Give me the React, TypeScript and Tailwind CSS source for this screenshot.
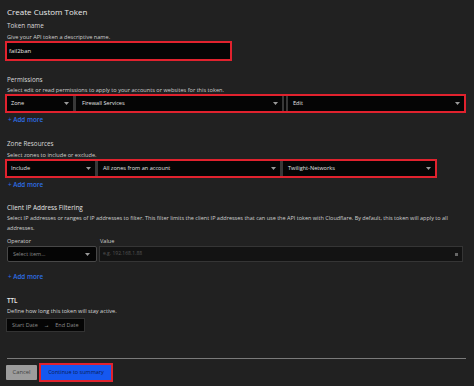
import React from "react";

const Caret = () => (
  <svg width="5" height="3" viewBox="0 0 5 3" className="shrink-0">
    <path d="M0 0 L5 0 L2.5 3 Z" fill="#9a9a9a" />
  </svg>
);

const Cell = ({ label, w, pl }: { label: string; w: string; pl: string }) => (
  <div className={`${w} h-full bg-[#050505] flex items-center justify-between ${pl} pr-[4px]`}>
    <span className="text-[5.6px] text-[#e4e4e4] whitespace-nowrap">{label}</span>
    <Caret />
  </div>
);

const AddMore = ({ mt }: { mt: string }) => (
  <div className={`${mt} h-[10px] leading-[10px] text-[6.3px] text-[#2e6fe6] font-semibold pl-[1px] whitespace-nowrap`}>
    <span className="font-normal">+</span> Add more
  </div>
);

export default function App() {
  return (
    <div
      className="w-[474px] h-[386px] bg-[#212121] text-[#dcdcdc] px-[7px] pt-[5px] overflow-hidden flex flex-col"
      style={{ fontFamily: '"Open Sans", "Noto Sans", sans-serif' }}
    >
      <div className="h-[14px] leading-[14px] text-[8px] text-[#ececec] whitespace-nowrap">Create Custom Token</div>
      <div className="mt-[2px] h-[10px] leading-[10px] text-[6.4px] text-[#d8d8d8] whitespace-nowrap">Token name</div>
      <div className="mt-[2px] h-[8px] leading-[8px] text-[5.6px] text-[#d0d0d0] whitespace-nowrap">Give your API token a descriptive name.</div>
      <div className="ml-[-2px] w-[227px] h-[20px] border-2 border-[#e1222e] bg-[#050505] flex items-center pl-[2px]">
        <span className="text-[5.9px] text-[#e8e8e8]">fail2ban</span>
      </div>

      <div className="mt-[14px] h-[10px] leading-[10px] text-[6.3px] text-[#d8d8d8] whitespace-nowrap">Permissions</div>
      <div className="mt-[1px] h-[8px] leading-[8px] text-[5.6px] text-[#d0d0d0] whitespace-nowrap">
        Select edit or read permissions to apply to your accounts or websites for this token.
      </div>
      <div className="ml-[-2px] w-[461px] h-[19px] border-2 border-[#e1222e] bg-[#383838] flex gap-[3px]">
        <Cell label="Zone" w="w-[66px]" pl="pl-[4px]" />
        <Cell label="Firewall Services" w="w-[206px]" pl="pl-[6px]" />
        <div className="w-[2px] h-full bg-[#050505] -mx-[1px]" />
        <Cell label="Edit" w="flex-1" pl="pl-[5px]" />
      </div>
      <AddMore mt="mt-[2px]" />

      <div className="mt-[14px] h-[10px] leading-[10px] text-[6.3px] text-[#d8d8d8] whitespace-nowrap">Zone Resources</div>
      <div className="mt-[2px] h-[8px] leading-[8px] text-[5.6px] text-[#d0d0d0] whitespace-nowrap">Select zones to include or exclude.</div>
      <div className="ml-[-2px] w-[432px] h-[19px] border-2 border-[#e1222e] bg-[#383838] flex gap-[3px]">
        <Cell label="Include" w="w-[88px]" pl="pl-[4px]" />
        <Cell label="All zones from an account" w="w-[182px]" pl="pl-[5px]" />
        <Cell label="Twilight-Networks" w="flex-1" pl="pl-[5px]" />
      </div>
      <AddMore mt="mt-[2px]" />

      <div className="mt-[13px] h-[10px] leading-[10px] text-[6.4px] text-[#e4e4e4] whitespace-nowrap">Client IP Address Filtering</div>
      <div className="leading-[10px] text-[5.5px] text-[#cfcfcf] w-[458px]">
        Select IP addresses or ranges of IP addresses to filter. This filter limits the client IP addresses that can use the API token with Cloudflare. By default, this token will apply to all addresses.
      </div>
      <div className="mt-[3px] flex h-[10px] leading-[10px] text-[5.6px] text-[#d0d0d0] whitespace-nowrap">
        <div className="w-[93px]">Operator</div>
        <div>Value</div>
      </div>
      <div className="flex h-[16px]">
        <div className="w-[90px] h-full bg-[#050505] border border-[#484848] rounded-[2px] flex items-center justify-between pl-[5px] pr-[6px]">
          <span className="text-[5.5px] text-[#8a8a8a] whitespace-nowrap">Select item...</span>
          <Caret />
        </div>
        <div className="ml-[2px] w-[364px] h-full bg-[#131313] border border-[#353535] flex items-center justify-between pl-[3px] pr-[4px]">
          <span className="text-[5px] text-[#555] whitespace-nowrap">e.g. 192.168.1.88</span>
          <span className="w-[3px] h-[3px] bg-[#666]" />
        </div>
      </div>
      <AddMore mt="mt-[10px]" />

      <div className="mt-[14px] h-[10px] leading-[10px] text-[6.3px] text-[#ececec] font-semibold whitespace-nowrap">TTL</div>
      <div className="mt-[1px] h-[9px] leading-[9px] text-[5.6px] text-[#d8d8d8] whitespace-nowrap">Define how long this token will stay active.</div>
      <div className="mt-[2px] ml-[-1px] w-[79px] h-[14px] bg-[#050505] border border-[#333] flex items-center pl-[5px] text-[5.5px] text-[#8a8a8a] whitespace-nowrap">
        <span>Start Date</span>
        <span className="ml-[6px] text-[#c4c4c4]">→</span>
        <span className="ml-[6px]">End Date</span>
      </div>

      <div className="mt-[26px] w-[459px] h-[1px] bg-[#7a7a7a]" />

      <div className="mt-[4px] ml-[-1px] flex items-center gap-[2px]">
        <div className="w-[31px] h-[15px] bg-[#9c9c9c] rounded-[1px] flex items-center justify-center text-[5.8px] text-[#3e3e3e] whitespace-nowrap">
          Cancel
        </div>
        <div className="w-[74px] h-[19px] border-2 border-[#e1222e] bg-[#1558f0] flex items-center justify-center text-[5.5px] text-[#0b1c52] whitespace-nowrap">
          Continue to summary
        </div>
      </div>
    </div>
  );
}
